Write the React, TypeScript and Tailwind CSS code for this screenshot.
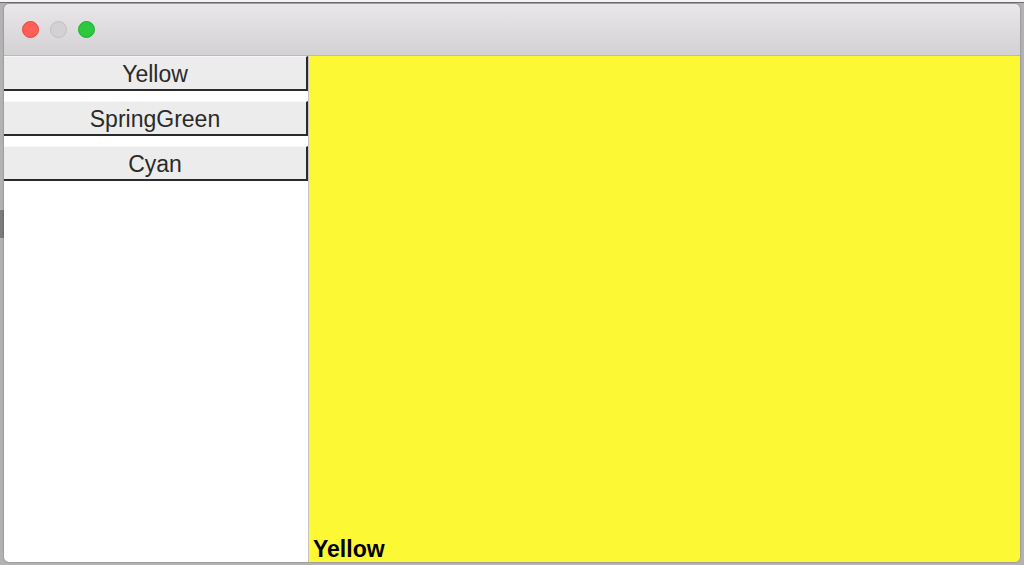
import React from "react";

const buttons = ["Yellow", "SpringGreen", "Cyan"];

export default function App() {
  return (
    <div className="relative w-[1024px] h-[565px] overflow-hidden bg-[#b3b3b3]" style={{ fontFamily: '"Liberation Sans", Arial, sans-serif' }}>
      <div className="absolute left-0 top-0 w-full h-[2px] bg-[#f4f4f4]" />
      <div className="absolute left-0 top-[2px] w-full h-[1px] bg-[#6d6d6d]" />
      <div className="absolute left-0 top-[210px] w-[4px] h-[28px] bg-[#7c7c7c]" />
      <div className="absolute left-[4px] top-[4px] w-[1016px] h-[558px] rounded-[5px] overflow-hidden flex flex-col shadow-[0_0_2px_rgba(0,0,0,0.4)]">
        <div className="h-[52px] shrink-0 flex items-center pl-[18px] gap-[11px] bg-gradient-to-b from-[#e9e7e9] to-[#d3d1d3] border-b border-[#b9b9b9]">
          <div className="w-[17px] h-[17px] rounded-full bg-[#fe5f57] border border-[#e2463f]" />
          <div className="w-[17px] h-[17px] rounded-full bg-[#d2d2d2] border border-[#c0c0c0]" />
          <div className="w-[17px] h-[17px] rounded-full bg-[#2bc840] border border-[#1fad2e]" />
        </div>
        <div className="flex flex-1 min-h-0">
          <div className="w-[305px] shrink-0 bg-white border-r border-[#c4c4c4] flex flex-col gap-[10px]">
            {buttons.map((b) => (
              <div
                key={b}
                className="w-[304px] h-[35px] pt-[2px] flex items-center justify-center bg-[#ececec] border-t border-t-[#f7f7f7] border-b-2 border-r-2 border-b-[#2a2a2a] border-r-[#2a2a2a] text-[23px] text-[#2a2a2a]"
              >
                {b}
              </div>
            ))}
          </div>
          <div className="flex-1 bg-[#fdf834] flex items-end pl-[4px] pb-[2px]">
            <span className="text-[23px] leading-[22px] font-bold text-black">Yellow</span>
          </div>
        </div>
      </div>
    </div>
  );
}
